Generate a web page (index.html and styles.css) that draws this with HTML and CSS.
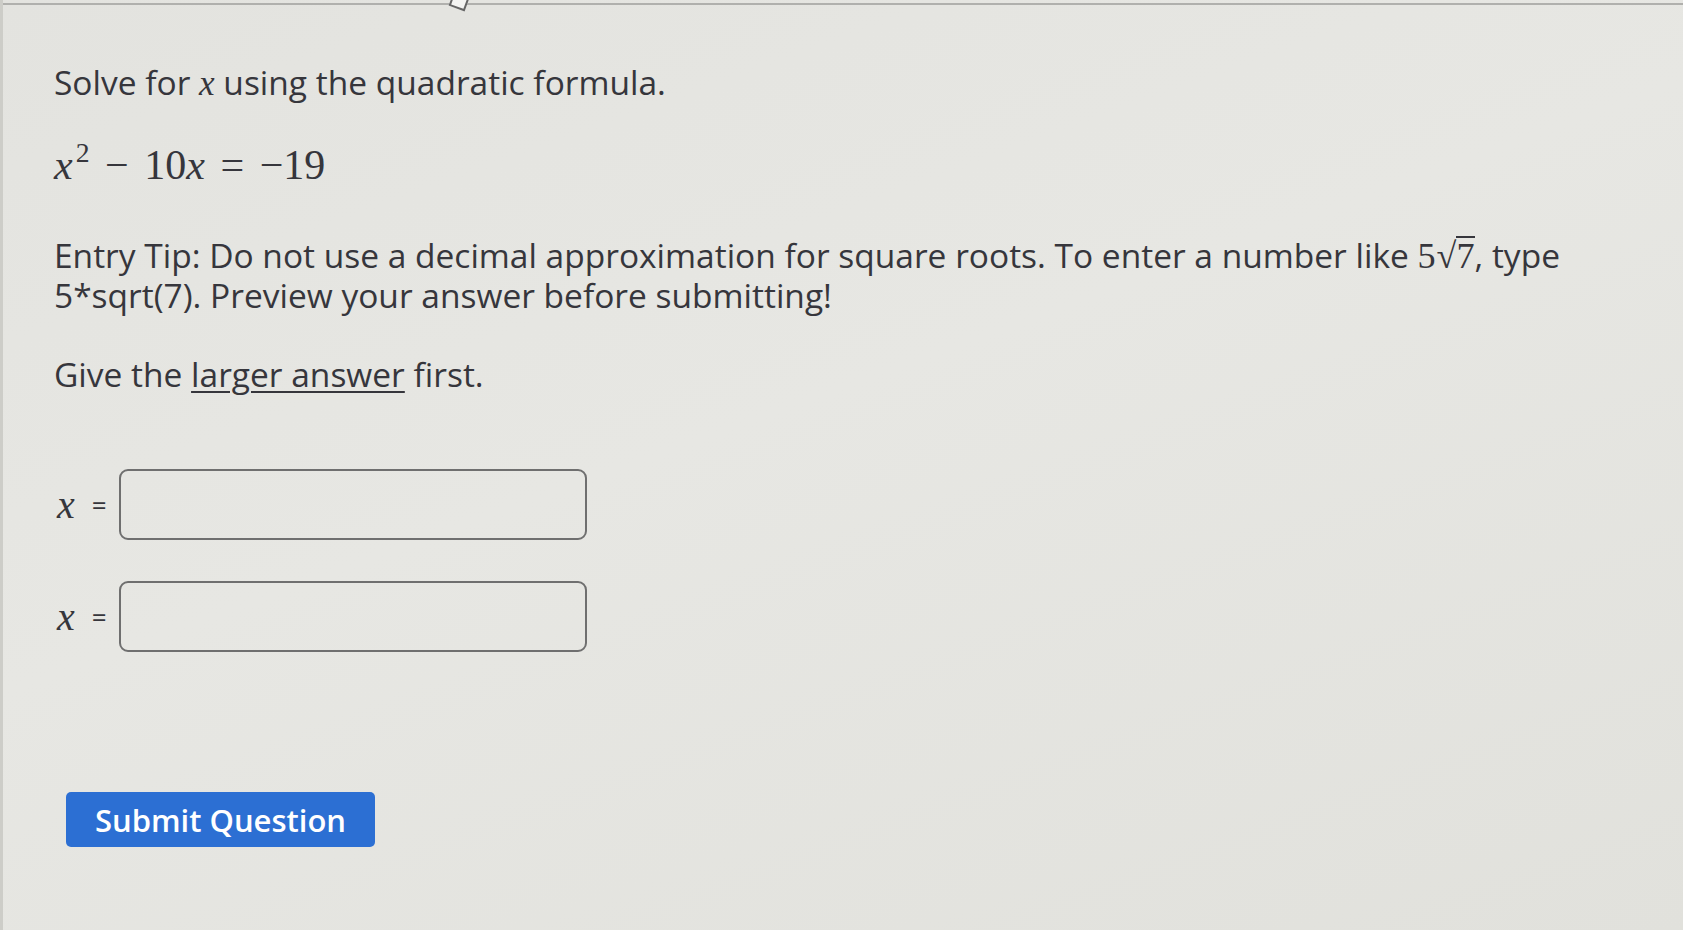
FILE: index.html
```html
<!DOCTYPE html>
<html lang="en">
<head>
<meta charset="utf-8">
<title>Quadratic formula question</title>
<link rel="stylesheet" href="styles.css">
</head>
<body>
<div class="topbar"><span class="topmark"></span></div>
<main class="question">
  <p class="line prompt">Solve for <span class="mi">x</span> using the quadratic formula.</p>
  <p class="math eq"><span class="mi">x</span><sup class="sup">2</sup><span class="op">−</span>10<span class="mi">x</span><span class="op">=</span>−19</p>
  <p class="line tip">Entry Tip: Do not use a decimal approximation for square roots. To enter a number like <span class="math inl">5<span class="sqrt"><span class="rad">√</span><span class="radicand">7</span></span></span>, type 5*sqrt(7). Preview your answer before submitting!</p>
  <p class="line give">Give the <u class="ul">larger answer</u> first.</p>
  <div class="answers">
    <label class="answer">
      <span class="lbl"><span class="mi small">x</span><span class="eqs">=</span></span>
      <input class="field" type="text">
    </label>
    <label class="answer">
      <span class="lbl"><span class="mi small">x</span><span class="eqs">=</span></span>
      <input class="field" type="text">
    </label>
  </div>
  <button class="submit" type="button">Submit Question</button>
</main>
</body>
</html>
```
FILE: styles.css
```css
html, body {
  margin: 0;
  padding: 0;
}
body {
  width: 1683px;
  height: 930px;
  overflow: hidden;
  background: linear-gradient(160deg, #e3e3df 0%, #e7e7e3 45%, #e1e1dc 100%);
  color: #36363c;
  font-family: "Open Sans", "DejaVu Sans", sans-serif;
  border-left: 3px solid #cdcdc8;
  box-sizing: border-box;
  position: relative;
}
.topbar {
  height: 3px;
  border-bottom: 2px solid #b0b0ad;
  position: relative;
}
.topmark {
  position: absolute;
  left: 448px;
  top: -8px;
  width: 13px;
  height: 13px;
  background: #f4f4f2;
  border: 2px solid #666;
  transform: rotate(20deg);
}
.question {
  padding-left: 51px;
  width: 1590px;
}
.line {
  margin: 0;
  font-size: 33.5px;
  line-height: 39px;
}
.prompt {
  margin-top: 58px;
}
.math {
  font-family: "Liberation Serif", "DejaVu Serif", serif;
}
.mi {
  font-family: "Liberation Serif", "DejaVu Serif", serif;
  font-style: italic;
  font-size: 1.05em;
}
.eq {
  margin: 42px 0 0;
  font-size: 42px;
  line-height: 41px;
}
.eq .mi { font-size: 1em; }
.sup {
  font-size: 0.66em;
  vertical-align: 0;
  position: relative;
  top: -0.62em;
  margin-left: 3px;
}
.op {
  margin: 0 0.37em;
}
.tip {
  margin-top: 46px;
}
.inl {
  font-size: 1.08em;
}
.sqrt {
  display: inline-block;
  line-height: 1;
}
.rad {
  margin-left: 1px;
}
.radicand {
  display: inline-block;
  border-top: 2px solid #36363c;
  line-height: 0.95;
  padding-top: 1px;
}
.give {
  margin-top: 40px;
}
.ul {
  text-decoration-thickness: 2px;
  text-underline-offset: 4px;
}
.answers {
  margin-top: 75px;
  display: flex;
  flex-direction: column;
  gap: 41px;
}
.answer {
  display: flex;
  align-items: center;
}
.lbl {
  width: 62px;
  display: flex;
  align-items: center;
  gap: 17px;
  padding-left: 3px;
}
.small {
  font-size: 40px;
  line-height: 1;
}
.eqs {
  font-size: 26px;
}
.field {
  width: 468px;
  height: 71px;
  box-sizing: border-box;
  border: 2px solid #6f6f6f;
  border-radius: 9px;
  background: transparent;
  margin: 0;
  font-size: 24px;
}
.submit {
  margin-top: 140px;
  margin-left: 12px;
  width: 309px;
  height: 55px;
  border: 0;
  border-radius: 5px;
  background: #2c6fd3;
  color: #fff;
  font-family: "Open Sans", "DejaVu Sans", sans-serif;
  font-size: 31px;
  font-weight: 600;
  padding: 0;
}
```
